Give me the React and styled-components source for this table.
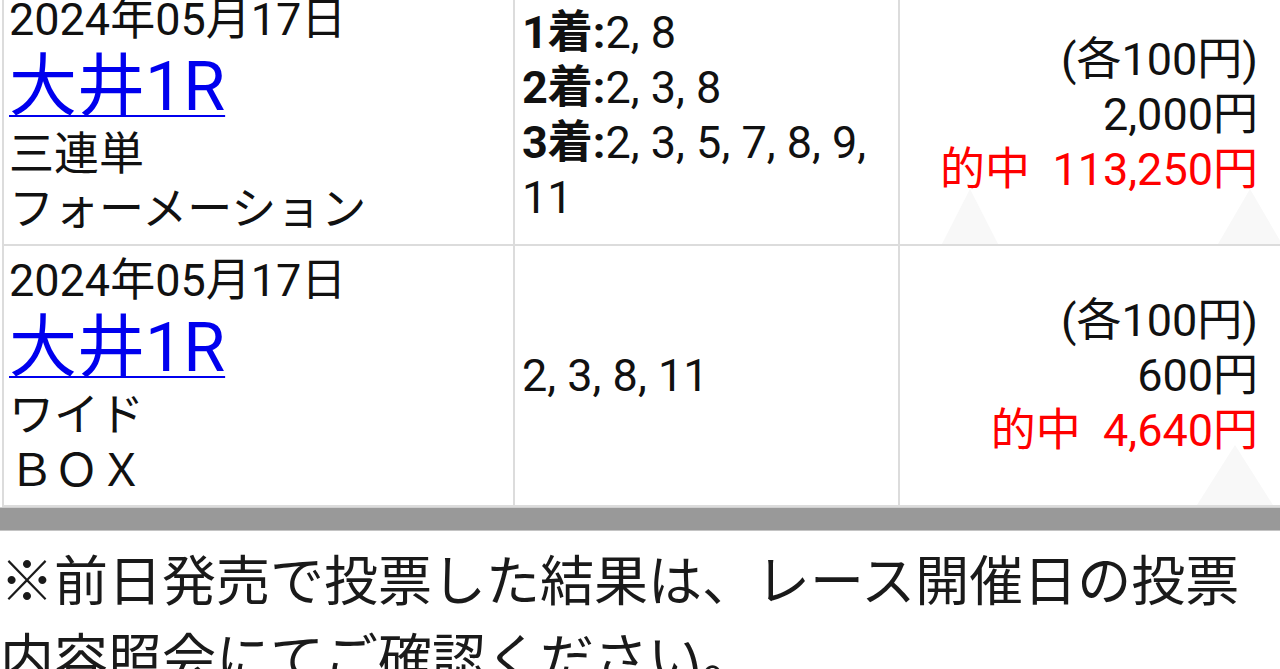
import React from "react";
import styled, { createGlobalStyle } from "styled-components";

const Global = createGlobalStyle`
  html, body { margin: 0; padding: 0; background: #fff; overflow: hidden; }
  body { font-family: Roboto, "Noto Sans CJK JP", sans-serif; color: #111; }
`;

const Page = styled.div`
  margin-top: -15px;
  width: 1280px;
`;

const Table = styled.div`
  display: grid;
  grid-template-columns: 511px 385px 1fr;
  width: 1282px;
  margin-left: 2px;
  border-left: 2px solid #dcdcdc;
  box-sizing: border-box;
`;

const Cell = styled.div`
  position: relative;
  box-sizing: border-box;
  border-right: 2px solid #dcdcdc;
  border-bottom: 2px solid #dcdcdc;
  padding: 7px ${(p) => (p.$right ? "24px" : "7px")} 7px ${(p) => p.$pl || 7}px;
  font-size: 45px;
  line-height: 55px;
  display: flex;
  flex-direction: column;
  justify-content: ${(p) => (p.$middle ? "center" : "flex-start")};
  align-items: ${(p) => (p.$right ? "flex-end" : "flex-start")};
  text-align: ${(p) => (p.$right ? "right" : "left")};
  overflow: hidden;
`;

const Line = styled.div`
  white-space: ${(p) => (p.$pre ? "pre" : "normal")};
  color: ${(p) => (p.$hit ? "#ff0000" : "inherit")};
`;

const RaceLink = styled.a`
  font-size: 68px;
  line-height: 80px;
  color: #0000ee;
  text-decoration: underline;
  text-decoration-thickness: 2px;
  text-underline-offset: 5px;
`;

const Strong = styled.b`
  font-weight: 700;
`;

const Ghost = styled.div`
  position: absolute;
  bottom: 0;
  left: ${(p) => p.$x}px;
  width: 0;
  height: 0;
  border-left: ${(p) => p.$w / 2}px solid transparent;
  border-right: ${(p) => p.$w / 2}px solid transparent;
  border-bottom: ${(p) => p.$h}px solid #f8f8f8;
`;

const Bar = styled.div`
  height: 22px;
  background: #999;
  border-top: 1px solid #cfcfcf;
  border-bottom: 1px solid #c4c4c4;
`;

const Note = styled.p`
  margin: 8px 0 0;
  font-family: "Noto Sans CJK JP", sans-serif;
  font-size: 54px;
  line-height: 78px;
  color: #1a1a1a;
`;

const rows = [
  {
    date: "2024年05月17日",
    race: "大井1R",
    kind: ["三連単", "フォーメーション"],
    picks: [
      ["1着:", "2, 8"],
      ["2着:", "2, 3, 8"],
      ["3着:", "2, 3, 5, 7, 8, 9, 11"],
    ],
    total: "2,000円",
    hit: "的中  113,250円",
    ghosts: [
      { x: 42, w: 56, h: 55 },
      { x: 318, w: 64, h: 55 },
    ],
  },
  {
    date: "2024年05月17日",
    race: "大井1R",
    kind: ["ワイド", "ＢＯＸ"],
    picks: [[null, "2, 3, 8, 11"]],
    total: "600円",
    hit: "的中  4,640円",
    ghosts: [{ x: 297, w: 76, h: 60 }],
  },
];

export default function App() {
  return (
    <Page>
      <Global />
      <Table>
        {rows.map((r, i) => (
          <React.Fragment key={i}>
            <Cell $pl={5}>
              <Line>{r.date}</Line>
              <RaceLink href="#">{r.race}</RaceLink>
              {r.kind.map((k) => (
                <Line key={k}>{k}</Line>
              ))}
            </Cell>
            <Cell $middle>
              {r.picks.map(([label, nums], j) => (
                <Line key={j}>
                  {label && <Strong>{label}</Strong>}
                  {nums}
                </Line>
              ))}
            </Cell>
            <Cell $middle $right>
              {r.ghosts.map((g, j) => (
                <Ghost key={j} $x={g.x} $w={g.w} $h={g.h} />
              ))}
              <Line>(各100円)</Line>
              <Line>{r.total}</Line>
              <Line $hit $pre>
                {r.hit}
              </Line>
            </Cell>
          </React.Fragment>
        ))}
      </Table>
      <Bar />
      <Note>
        ※前日発売で投票した結果は、レース開催日の投票内容照会にてご確認ください。
      </Note>
    </Page>
  );
}
